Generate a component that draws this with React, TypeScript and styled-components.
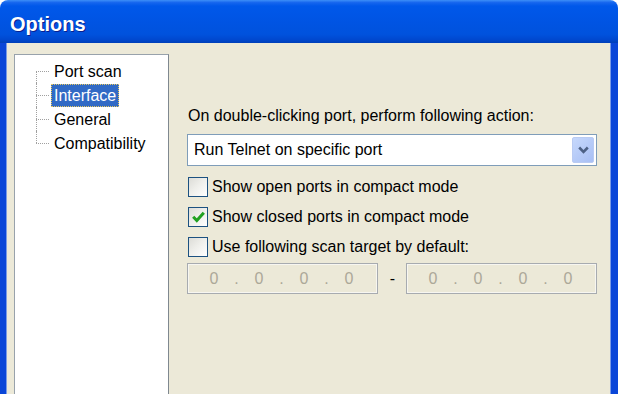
import React from 'react';
import styled, { createGlobalStyle } from 'styled-components';

const GlobalStyle = createGlobalStyle`
  html, body {
    margin: 0;
    padding: 0;
    background: #ffffff;
  }
  body {
    font-family: "Liberation Sans", Arial, sans-serif;
    font-size: 16px;
    color: #000;
  }
`;

const Screen = styled.div`
  width: 618px;
  height: 394px;
  overflow: hidden;
  display: flex;
  flex-direction: column;
`;

const TitleBar = styled.div`
  height: 43px;
  flex: none;
  box-sizing: border-box;
  padding: 6px 0 0 10px;
  display: flex;
  align-items: center;
  border-radius: 8px 8px 0 0;
  background: linear-gradient(
    to bottom,
    #3d8ff7 0%,
    #1666ee 6%,
    #0058ea 14%,
    #0054e3 50%,
    #0052dd 80%,
    #0048cf 92%,
    #003fb8 100%
  );
  color: #fff;
  font-weight: bold;
  font-size: 20px;
  text-shadow: 1px 1px 0 #0a1f8f;
`;

const Frame = styled.div`
  flex: 1;
  display: flex;
  gap: 18px;
  padding: 11px 0 0 8px;
  background: #ece9d8;
  border-left: 6px solid #0a46d8;
  border-right: 7px solid #0a46d8;
  box-shadow: inset 1px 0 0 #7a9be6, inset -1px 0 0 #7a9be6;
`;

const TreePanel = styled.div`
  width: 155px;
  box-sizing: border-box;
  flex: none;
  background: #fff;
  border: 1px solid #98a2ab;
  border-bottom: none;
  border-right-color: #7f8890;
  padding: 4px 0 0 21px;
`;

const TreeItem = styled.div<{ $first?: boolean; $last?: boolean }>`
  position: relative;
  height: 24px;
  display: flex;
  align-items: center;
  padding-left: 15px;

  &::before {
    content: '';
    position: absolute;
    left: 0;
    top: 12px;
    width: 13px;
    border-top: 1px dotted #a0a0a0;
  }

  &::after {
    content: '';
    position: absolute;
    left: 0;
    top: ${(p) => (p.$first ? '12px' : '0')};
    bottom: ${(p) => (p.$last ? '12px' : '0')};
    border-left: 1px dotted #a0a0a0;
  }
`;

const ItemLabel = styled.span<{ $selected?: boolean }>`
  padding: 1px 2px;
  line-height: 19px;
  border: 1px dotted ${(p) => (p.$selected ? '#e8c860' : 'transparent')};
  background: ${(p) => (p.$selected ? '#316ac5' : 'transparent')};
  color: ${(p) => (p.$selected ? '#fff' : '#000')};
`;

const Content = styled.div`
  width: 410px;
  display: flex;
  flex-direction: column;
  padding-top: 52px;
`;

const Label = styled.div`
  line-height: 20px;
  margin-left: 1px;
`;

const Combo = styled.div`
  margin-top: 8px;
  height: 32px;
  box-sizing: border-box;
  border: 1px solid #7f9db9;
  background: #fff;
  display: flex;
  align-items: center;
  justify-content: space-between;
  padding: 2px 2px 2px 6px;
`;

const DropButton = styled.div`
  width: 22px;
  height: 26px;
  border-radius: 2px;
  background: linear-gradient(135deg, #c6d8fc 0%, #b4c9f7 60%, #a8bff4 100%);
  border: 1px solid #b9cbf3;
  box-sizing: border-box;
  display: flex;
  align-items: center;
  justify-content: center;
`;

const CheckList = styled.div`
  margin-top: 11px;
  display: flex;
  flex-direction: column;
  gap: 10px;
`;

const CheckRow = styled.label`
  display: flex;
  align-items: center;
  gap: 4px;
  height: 20px;
  margin-left: 1px;
  line-height: 20px;
`;

const CheckBox = styled.span`
  width: 20px;
  height: 20px;
  box-sizing: border-box;
  border: 1px solid #1c5180;
  background: linear-gradient(135deg, #dcdcd7 0%, #eeeeea 45%, #ffffff 100%);
  display: flex;
  align-items: center;
  justify-content: center;
  flex: none;
`;

const RangeRow = styled.div`
  margin-top: 6px;
  display: flex;
  align-items: center;
`;

const IpField = styled.div`
  width: 191px;
  height: 31px;
  box-sizing: border-box;
  border: 1px solid #a7abb0;
  box-shadow: inset 0 0 0 1px #f7f6f1;
  background: #ece9d8;
  display: flex;
  align-items: center;
  padding-left: 10px;
  color: #aca899;
`;

const Octet = styled.span`
  width: 32px;
  text-align: center;
`;

const Dot = styled.span`
  width: 13px;
  text-align: center;
`;

const Dash = styled.span`
  width: 27px;
  text-align: center;
  margin-left: 1px;
`;

const treeItems = ['Port scan', 'Interface', 'General', 'Compatibility'];

const Check = () => (
  <svg width="13" height="12" viewBox="0 0 13 12">
    <path d="M1.2 5.8 L4.8 9.6 L11.8 1.8" fill="none" stroke="#21a121" strokeWidth="3" />
  </svg>
);

const Chevron = () => (
  <svg width="11" height="8" viewBox="0 0 11 8">
    <path d="M1.2 1.5 L5.5 5.8 L9.8 1.5" fill="none" stroke="#4d6185" strokeWidth="2.6" />
  </svg>
);

const Ip = () => (
  <IpField>
    <Octet>0</Octet>
    <Dot>.</Dot>
    <Octet>0</Octet>
    <Dot>.</Dot>
    <Octet>0</Octet>
    <Dot>.</Dot>
    <Octet>0</Octet>
  </IpField>
);

const options = [
  { text: 'Show open ports in compact mode', checked: false },
  { text: 'Show closed ports in compact mode', checked: true },
  { text: 'Use following scan target by default:', checked: false },
];

export default function App() {
  return (
    <>
      <GlobalStyle />
      <Screen>
        <TitleBar>Options</TitleBar>
        <Frame>
          <TreePanel>
            {treeItems.map((item, i) => (
              <TreeItem key={item} $first={i === 0} $last={i === treeItems.length - 1}>
                <ItemLabel $selected={item === 'Interface'}>{item}</ItemLabel>
              </TreeItem>
            ))}
          </TreePanel>
          <Content>
            <Label>On double-clicking port, perform following action:</Label>
            <Combo>
              <span>Run Telnet on specific port</span>
              <DropButton>
                <Chevron />
              </DropButton>
            </Combo>
            <CheckList>
              {options.map((o) => (
                <CheckRow key={o.text}>
                  <CheckBox>{o.checked && <Check />}</CheckBox>
                  <span>{o.text}</span>
                </CheckRow>
              ))}
            </CheckList>
            <RangeRow>
              <Ip />
              <Dash>-</Dash>
              <Ip />
            </RangeRow>
          </Content>
        </Frame>
      </Screen>
    </>
  );
}
